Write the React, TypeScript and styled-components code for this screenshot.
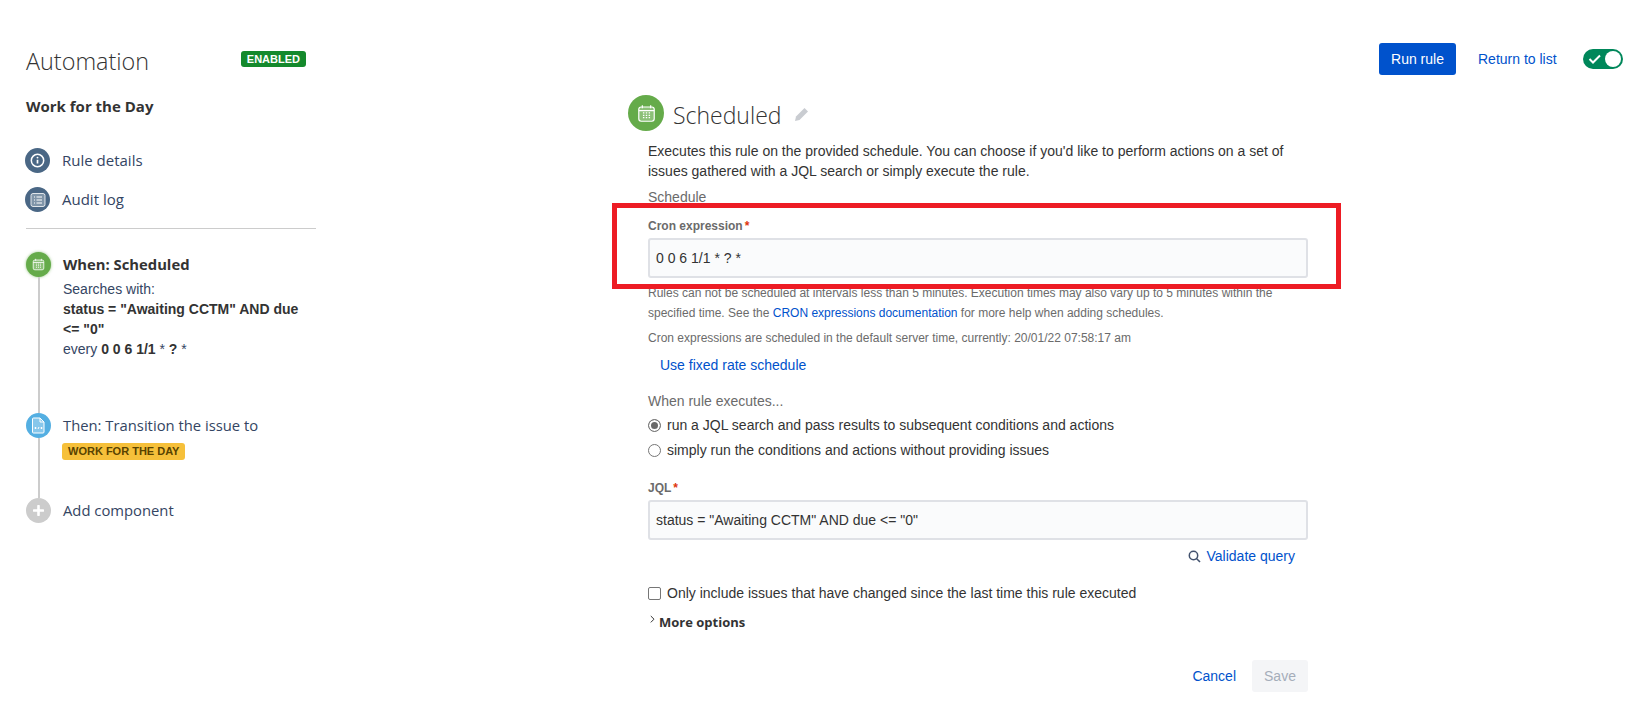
import styled, { createGlobalStyle } from "styled-components";

const GlobalStyle = createGlobalStyle`
  html, body { margin: 0; padding: 0; background: #fff; }
  body {
    width: 1640px;
    height: 720px;
    overflow: hidden;
    font-family: "Liberation Sans", Arial, sans-serif;
    font-size: 14px;
    color: #333;
  }
  a { color: #0052cc; text-decoration: none; }
`;

const Page = styled.div`
  display: grid;
  grid-template-columns: 628px 720px 1fr;
  height: 720px;
`;

const Sidebar = styled.aside`
  padding: 44px 0 0 26px;
  width: 290px;
`;

const SidebarHead = styled.div`
  display: flex;
  align-items: flex-start;
  justify-content: space-between;
  width: 280px;
  height: 34px;
`;

const Heading = styled.h1`
  margin: 0;
  font: 300 23.4px/34px "Open Sans", sans-serif;
  color: #333;
`;

const Lozenge = styled.span`
  margin-top: 7px;
  padding: 0 6px;
  height: 16px;
  line-height: 16px;
  border-radius: 3px;
  background: #14892c;
  color: #fff;
  font-size: 11px;
  font-weight: 700;
`;

const RuleName = styled.div`
  margin-top: 18px;
  font: 700 15px/20px "Open Sans", sans-serif;
  color: #333;
`;

const NavList = styled.div`
  margin: 32px 0 0 -1px;
  display: flex;
  flex-direction: column;
  gap: 14px;
`;

const NavItem = styled.div`
  display: flex;
  align-items: center;
  gap: 12px;
  height: 25px;
  font: 400 15px/25px "Open Sans", sans-serif;
  color: #344563;
`;

const Dot = styled.span<{ $bg: string; $size?: number; $glow?: boolean }>`
  flex: none;
  display: flex;
  align-items: center;
  justify-content: center;
  width: ${(p) => p.$size ?? 25}px;
  height: ${(p) => p.$size ?? 25}px;
  border-radius: 50%;
  background: ${(p) => p.$bg};
  box-shadow: ${(p) => (p.$glow ? "0 0 3px rgba(101, 171, 74, 0.7)" : "none")};
`;

const Divider = styled.hr`
  margin: 16px 0 0;
  border: 0;
  border-top: 1px solid #ccc;
`;

const Timeline = styled.div`
  margin-top: 23px;
`;

const Step = styled.div<{ $height: number }>`
  display: flex;
  gap: 12px;
  height: ${(p) => p.$height}px;
`;

const Rail = styled.div`
  flex: none;
  width: 25px;
  display: flex;
  flex-direction: column;
  align-items: center;
`;

const RailLine = styled.div`
  flex: 1;
  width: 2px;
  background: #ccc;
`;

const StepBody = styled.div`
  min-width: 0;
  width: 245px;
`;

const StepTitle = styled.div<{ $bold?: boolean }>`
  font: ${(p) => (p.$bold ? 700 : 400)} 14.8px/25px "Open Sans", sans-serif;
  color: ${(p) => (p.$bold ? "#333" : "#344563")};
`;

const StepDetail = styled.div`
  margin-top: 2px;
  line-height: 20px;
  color: #344563;
  strong { color: #333; }
`;

const StatusTag = styled.span`
  display: inline-block;
  margin: 5px 0 0 -1px;
  padding: 0 6px;
  height: 17px;
  line-height: 17px;
  border-radius: 3px;
  background: #f6c03a;
  color: #594300;
  font-size: 11px;
  font-weight: 700;
`;

const Main = styled.main`
  padding-top: 95px;
`;

const TitleRow = styled.div`
  display: flex;
  align-items: center;
  height: 36px;
`;

const Title = styled.h2`
  margin: 3px 13px 0 9px;
  font: 300 23px/36px "Open Sans", sans-serif;
  color: #333;
`;

const Form = styled.div`
  margin: 10px 0 0 20px;
  width: 660px;
`;

const Description = styled.p`
  margin: 0;
  line-height: 20px;
  color: #333;
`;

const SectionLabel = styled.div`
  margin-top: 6px;
  line-height: 20px;
  color: #6b6b6b;
`;

const Field = styled.div`
  position: relative;
`;

const FieldLabel = styled.label<{ $top: number }>`
  display: block;
  margin-top: ${(p) => p.$top}px;
  height: 22px;
  line-height: 20px;
  font-size: 12px;
  font-weight: 700;
  color: #6b6b6b;
  em { color: #de350b; font-style: normal; margin-left: 2px; }
`;

const TextBox = styled.div`
  box-sizing: border-box;
  height: 40px;
  padding: 0 6px;
  display: flex;
  align-items: center;
  background: #fafbfc;
  border: 2px solid #dfe1e6;
  border-radius: 3px;
  font-size: 14px;
  color: #333;
`;

const Highlight = styled.div`
  position: absolute;
  box-sizing: border-box;
  left: -36px;
  right: -33px;
  top: -13px;
  bottom: -11px;
  border: 5px solid #ed1c24;
  pointer-events: none;
`;

const Help = styled.p<{ $top: number }>`
  margin: ${(p) => p.$top}px 0 0;
  font-size: 12px;
  line-height: 20px;
  color: #6b6b6b;
`;

const SubLink = styled.a`
  display: block;
  margin: 7px 0 0 12px;
  line-height: 20px;
`;

const GroupLabel = styled.div`
  margin-top: 16px;
  line-height: 20px;
  color: #6b6b6b;
`;

const OptionRow = styled.div<{ $top: number }>`
  display: flex;
  align-items: center;
  gap: 6px;
  height: 20px;
  margin-top: ${(p) => p.$top}px;
  color: #333;
`;

const Radio = styled.span<{ $on?: boolean }>`
  box-sizing: border-box;
  flex: none;
  width: 13px;
  height: 13px;
  border-radius: 50%;
  border: 1px solid #767676;
  background: ${(p) => (p.$on ? "#6b6b6b" : "#fff")};
  box-shadow: ${(p) => (p.$on ? "inset 0 0 0 2px #fff" : "none")};
`;

const Checkbox = styled.span`
  box-sizing: border-box;
  flex: none;
  width: 13px;
  height: 13px;
  border-radius: 2px;
  border: 1px solid #767676;
  background: #fff;
`;

const ValidateRow = styled.div`
  display: flex;
  justify-content: flex-end;
  align-items: center;
  gap: 6px;
  height: 20px;
  margin-top: 6px;
  padding-right: 13px;
`;

const MoreOptions = styled.div`
  display: flex;
  align-items: center;
  gap: 4px;
  height: 20px;
  margin: 9px 0 0 2px;
  font: 700 13px/20px "Open Sans", sans-serif;
  color: #333;
`;

const Footer = styled.div`
  display: flex;
  justify-content: flex-end;
  align-items: center;
  gap: 16px;
  margin-top: 28px;
`;

const SaveButton = styled.button`
  width: 56px;
  height: 32px;
  border: 0;
  border-radius: 3px;
  background: #f4f5f7;
  color: #a5adba;
  font: 14px "Liberation Sans", Arial, sans-serif;
`;

const Actions = styled.div`
  display: flex;
  align-items: center;
  height: 32px;
  margin-top: 43px;
  padding-left: 31px;
`;

const RunButton = styled.button`
  width: 77px;
  height: 32px;
  border: 0;
  border-radius: 3px;
  background: #0052cc;
  color: #fff;
  font: 14px "Liberation Sans", Arial, sans-serif;
`;

const ReturnLink = styled.a`
  margin: 0 26px 0 22px;
`;

const Toggle = styled.span`
  position: relative;
  display: block;
  width: 40px;
  height: 20px;
  border-radius: 10px;
  background: #00875a;
`;

const Knob = styled.span`
  position: absolute;
  right: 2px;
  top: 2px;
  width: 16px;
  height: 16px;
  border-radius: 50%;
  background: #fff;
`;

const CalendarIcon = ({ size }: { size: number }) => (
  <svg width={size} height={size} viewBox="0 0 16 16" fill="none">
    <rect x="1.5" y="2.5" width="13" height="12" rx="2" fill="#fff" fillOpacity=".25" stroke="#fff" />
    <path d="M1.5 5.5h13M4.5 1v2.5M11.5 1v2.5" stroke="#fff" />
    <path d="M5 7.5h1.2M7.4 7.5h1.2M9.8 7.5H11M5 9.5h1.2M7.4 9.5h1.2M9.8 9.5H11M5 11.5h1.2M7.4 11.5h1.2M9.8 11.5H11" stroke="#fff" />
  </svg>
);

const InfoIcon = () => (
  <svg width="15" height="15" viewBox="0 0 16 16" fill="none">
    <circle cx="8" cy="8" r="6.6" stroke="#fff" strokeWidth="1.6" />
    <path d="M8 7.2v4" stroke="#fff" strokeWidth="1.8" />
    <circle cx="8" cy="4.9" r="1" fill="#fff" />
  </svg>
);

const LogIcon = () => (
  <svg width="16" height="16" viewBox="0 0 16 16" fill="none">
    <rect x="1" y="1.5" width="14" height="13" rx="2" fill="#fff" fillOpacity=".3" stroke="#fff" strokeOpacity=".8" />
    <path d="M4 5h1M6.5 5H12M4 8h1M6.5 8H12M4 11h1M6.5 11H12" stroke="#fff" />
  </svg>
);

const TransitionIcon = () => (
  <svg width="15" height="17" viewBox="0 0 15 17" fill="none">
    <path d="M2.5 1h6.5l4 4v10a1 1 0 0 1-1 1h-9.500a1 1 0 0 1-1-1V2a1 1 0 0 1 1-1z" fill="#fff" fillOpacity=".3" stroke="#fff" />
    <path d="M9 1v4h4" stroke="#fff" />
    <path d="M3.500 11h2M4.500 10v2M7 12l1-2M9.500 11h2M10.500 10v2" stroke="#fff" />
  </svg>
);

const PlusIcon = () => (
  <svg width="11" height="11" viewBox="0 0 11 11">
    <path d="M5.500 1v9M1 5.500h9" stroke="#fff" strokeWidth="2.600" strokeLinecap="round" />
  </svg>
);

const PencilIcon = () => (
  <svg width="15" height="15" viewBox="0 0 15 15" style={{ marginTop: 3 }}>
    <path d="M10.500 1l3.500 3.500L5.500 13 1 14l1-4.500z" fill="#c9ccd1" />
  </svg>
);

const SearchIcon = () => (
  <svg width="13" height="13" viewBox="0 0 13 13" fill="none">
    <circle cx="5.500" cy="5.500" r="4.200" stroke="#42526e" strokeWidth="1.500" />
    <path d="M8.700 8.700L12 12" stroke="#42526e" strokeWidth="1.600" />
  </svg>
);

const ChevronIcon = () => (
  <svg width="5" height="9" viewBox="0 0 5 9" fill="none" style={{ marginTop: -5 }}>
    <path d="M.8 1l3.200 3.200L.8 7.400" stroke="#333" strokeWidth="1" />
  </svg>
);

const CheckIcon = () => (
  <svg width="14" height="12" viewBox="0 0 14 12" fill="none" style={{ position: "absolute", left: 5, top: 4 }}>
    <path d="M1.500 6l3.500 3.500L12 2.500" stroke="#fff" strokeWidth="2" />
  </svg>
);

export default function App() {
  return (
    <>
      <GlobalStyle />
      <Page>
        <Sidebar>
          <SidebarHead>
            <Heading>Automation</Heading>
            <Lozenge>ENABLED</Lozenge>
          </SidebarHead>
          <RuleName>Work for the Day</RuleName>
          <NavList>
            <NavItem>
              <Dot $bg="#4a6785"><InfoIcon /></Dot>
              Rule details
            </NavItem>
            <NavItem>
              <Dot $bg="#4a6785"><LogIcon /></Dot>
              Audit log
            </NavItem>
          </NavList>
          <Divider />
          <Timeline>
            <Step $height={161}>
              <Rail>
                <Dot $bg="#65ab4a" $glow><CalendarIcon size={13} /></Dot>
                <RailLine />
              </Rail>
              <StepBody>
                <StepTitle $bold>When: Scheduled</StepTitle>
                <StepDetail>
                  Searches with:<br />
                  <strong>status = "Awaiting CCTM" AND due &lt;= "0"</strong><br />
                  every <strong>0 0 6 1/1</strong> * <strong>?</strong> *
                </StepDetail>
              </StepBody>
            </Step>
            <Step $height={85}>
              <Rail>
                <Dot $bg="#54afe2"><TransitionIcon /></Dot>
                <RailLine />
              </Rail>
              <StepBody>
                <StepTitle>Then: Transition the issue to</StepTitle>
                <StatusTag>WORK FOR THE DAY</StatusTag>
              </StepBody>
            </Step>
            <Step $height={25}>
              <Rail>
                <Dot $bg="#ccc"><PlusIcon /></Dot>
              </Rail>
              <StepTitle>Add component</StepTitle>
            </Step>
          </Timeline>
        </Sidebar>
        <Main>
          <TitleRow>
            <Dot $bg="#65ab4a" $size={36}><CalendarIcon size={19} /></Dot>
            <Title>Scheduled</Title>
            <PencilIcon />
          </TitleRow>
          <Form>
            <Description>
              Executes this rule on the provided schedule. You can choose if you'd like to perform actions on a set of
              issues gathered with a JQL search or simply execute the rule.
            </Description>
            <SectionLabel>Schedule</SectionLabel>
            <Field>
              <FieldLabel $top={9}>Cron expression<em>*</em></FieldLabel>
              <TextBox>0 0 6 1/1 * ? *</TextBox>
              <Highlight />
            </Field>
            <Help $top={5}>
              Rules can not be scheduled at intervals less than 5 minutes. Execution times may also vary up to 5 minutes within the
              specified time. See the <a href="#cron">CRON expressions documentation</a> for more help when adding schedules.
            </Help>
            <Help $top={5}>Cron expressions are scheduled in the default server time, currently: 20/01/22 07:58:17 am</Help>
            <SubLink href="#fixed">Use fixed rate schedule</SubLink>
            <GroupLabel>When rule executes...</GroupLabel>
            <OptionRow $top={4}><Radio $on />run a JQL search and pass results to subsequent conditions and actions</OptionRow>
            <OptionRow $top={5}><Radio />simply run the conditions and actions without providing issues</OptionRow>
            <FieldLabel $top={18}>JQL<em>*</em></FieldLabel>
            <TextBox>status = "Awaiting CCTM" AND due &lt;= "0"</TextBox>
            <ValidateRow><SearchIcon /><a href="#validate">Validate query</a></ValidateRow>
            <OptionRow $top={17}><Checkbox />Only include issues that have changed since the last time this rule executed</OptionRow>
            <MoreOptions><ChevronIcon />More options</MoreOptions>
            <Footer>
              <a href="#cancel">Cancel</a>
              <SaveButton>Save</SaveButton>
            </Footer>
          </Form>
        </Main>
        <Actions>
          <RunButton>Run rule</RunButton>
          <ReturnLink href="#list">Return to list</ReturnLink>
          <Toggle><CheckIcon /><Knob /></Toggle>
        </Actions>
      </Page>
    </>
  );
}
